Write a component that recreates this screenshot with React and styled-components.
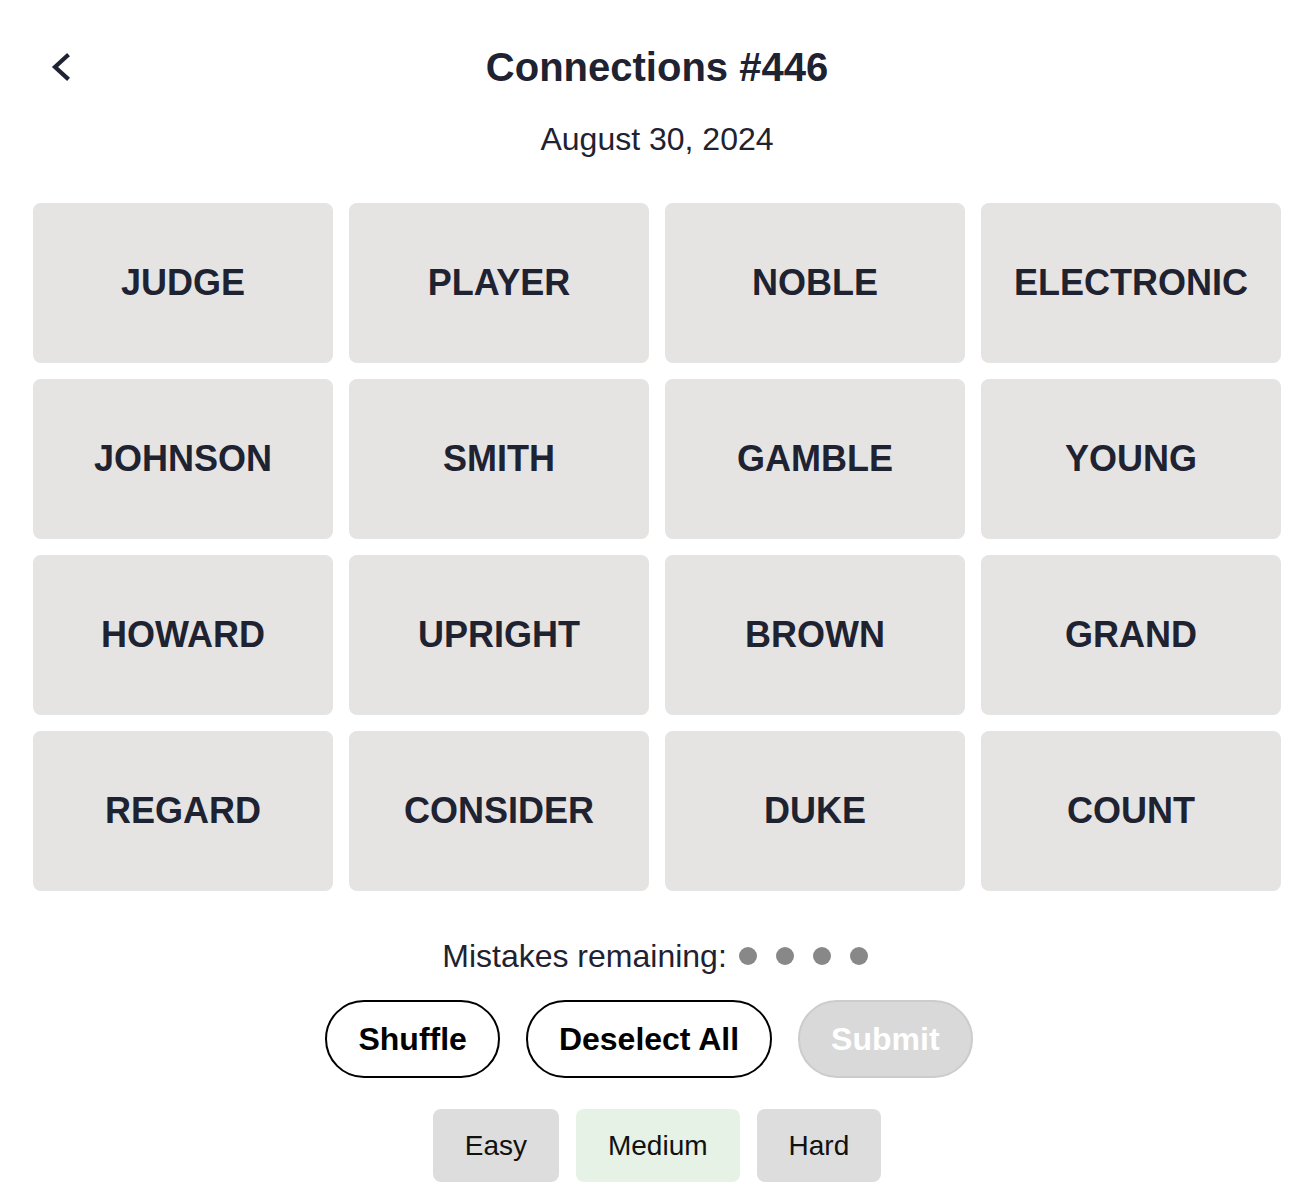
import React, { useState } from 'react';
import styled, { createGlobalStyle } from 'styled-components';

const GlobalStyle = createGlobalStyle`
  html, body {
    margin: 0;
    padding: 0;
    background: #ffffff;
  }
  body {
    font-family: "Liberation Sans", Arial, Helvetica, sans-serif;
    color: #1e2231;
  }
  * {
    box-sizing: border-box;
  }
`;

const words = [
  'JUDGE', 'PLAYER', 'NOBLE', 'ELECTRONIC',
  'JOHNSON', 'SMITH', 'GAMBLE', 'YOUNG',
  'HOWARD', 'UPRIGHT', 'BROWN', 'GRAND',
  'REGARD', 'CONSIDER', 'DUKE', 'COUNT'
];

const levels = ['Easy', 'Medium', 'Hard'];

const App = () => {
  const [selected, setSelected] = useState([]);
  const [level, setLevel] = useState('Medium');

  const toggle = (word) => {
    if (selected.includes(word)) {
      setSelected(selected.filter((w) => w !== word));
    } else if (selected.length < 4) {
      setSelected([...selected, word]);
    }
  };

  return (
    <Page>
      <GlobalStyle />
      <Header>
        <BackButton aria-label="Back">
          <svg width="20" height="30" viewBox="0 0 20 30">
            <polyline
              points="16,4 4,15 16,26"
              fill="none"
              stroke="#1e2231"
              strokeWidth="4.2"
              strokeLinecap="square"
              strokeLinejoin="miter"
            />
          </svg>
        </BackButton>
        <Title>Connections #446</Title>
        <span />
      </Header>
      <DateLine>August 30, 2024</DateLine>

      <Grid>
        {words.map((word) => (
          <Tile
            key={word}
            $active={selected.includes(word)}
            onClick={() => toggle(word)}
          >
            {word}
          </Tile>
        ))}
      </Grid>

      <Mistakes>
        Mistakes remaining:
        <Dots>
          {[0, 1, 2, 3].map((i) => (
            <Dot key={i} />
          ))}
        </Dots>
      </Mistakes>

      <ActionRow>
        <PillButton>Shuffle</PillButton>
        <PillButton onClick={() => setSelected([])}>Deselect All</PillButton>
        <PillButton $disabled={selected.length !== 4}>Submit</PillButton>
      </ActionRow>

      <LevelRow>
        {levels.map((l) => (
          <LevelButton key={l} $current={l === level} onClick={() => setLevel(l)}>
            {l}
          </LevelButton>
        ))}
      </LevelRow>
    </Page>
  );
};

const Page = styled.div`
  width: 1310px;
  padding: 40px 29px 12px 33px;
`;

const Header = styled.div`
  display: grid;
  grid-template-columns: 1fr auto 1fr;
  align-items: center;
  height: 54px;
`;

const BackButton = styled.button`
  justify-self: start;
  display: flex;
  align-items: center;
  background: none;
  border: none;
  padding: 0 0 0 18px;
  cursor: pointer;
`;

const Title = styled.h1`
  margin: 0;
  font-size: 40px;
  font-weight: 700;
  line-height: 54px;
  color: #1e2231;
`;

const DateLine = styled.div`
  margin-top: 25px;
  text-align: center;
  font-size: 32px;
  line-height: 40px;
  color: #1e2231;
`;

const Grid = styled.div`
  margin-top: 44px;
  display: grid;
  grid-template-columns: repeat(4, 300px);
  grid-auto-rows: 160px;
  gap: 16px;
`;

const Tile = styled.button`
  display: flex;
  align-items: center;
  justify-content: center;
  border: none;
  border-radius: 8px;
  background: ${(p) => (p.$active ? '#5a594e' : '#e5e4e2')};
  color: ${(p) => (p.$active ? '#ffffff' : '#1e2231')};
  font-family: inherit;
  font-size: 36px;
  font-weight: 700;
  cursor: pointer;
`;

const Mistakes = styled.div`
  margin-top: 45px;
  display: flex;
  justify-content: center;
  align-items: center;
  padding-right: 4px;
  font-size: 32px;
  line-height: 40px;
  color: #1e2231;
`;

const Dots = styled.span`
  display: flex;
  gap: 19px;
  margin-left: 12px;
`;

const Dot = styled.span`
  width: 18px;
  height: 18px;
  border-radius: 50%;
  background: #888888;
`;

const ActionRow = styled.div`
  margin-top: 24px;
  display: flex;
  justify-content: center;
  gap: 26px;
  padding-right: 16px;
`;

const PillButton = styled.button`
  height: 78px;
  padding: 0 31px;
  border-radius: 39px;
  border: 2px solid ${(p) => (p.$disabled ? '#cccccc' : '#000000')};
  background: ${(p) => (p.$disabled ? '#d9d9d9' : '#ffffff')};
  color: ${(p) => (p.$disabled ? '#ffffff' : '#000000')};
  font-family: inherit;
  font-size: 32px;
  font-weight: 700;
  cursor: ${(p) => (p.$disabled ? 'default' : 'pointer')};
`;

const LevelRow = styled.div`
  margin-top: 31px;
  display: flex;
  justify-content: center;
  gap: 17px;
`;

const LevelButton = styled.button`
  height: 73px;
  padding: 0 32px;
  border: none;
  border-radius: 8px;
  background: ${(p) => (p.$current ? '#e5f2e5' : '#dddddd')};
  color: #111111;
  font-family: inherit;
  font-size: 28px;
  cursor: pointer;
`;

export default App;
